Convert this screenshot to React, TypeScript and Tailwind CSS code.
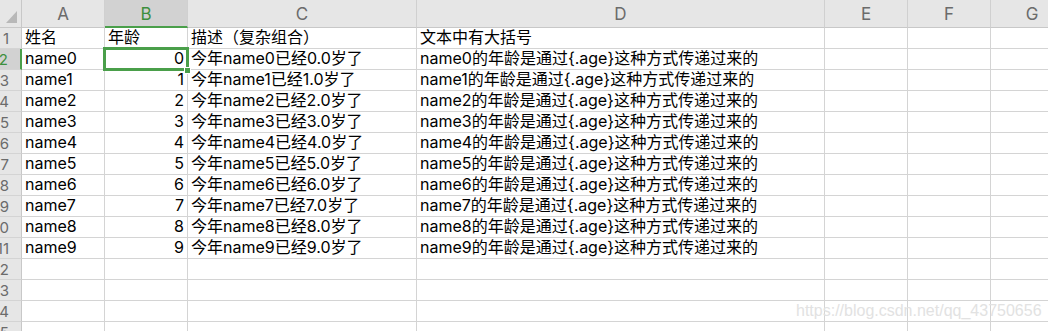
import type { ReactNode } from "react";

const FONT = "font-['Inter','Noto_Sans_CJK_SC',sans-serif]";

// column widths incl. right gridline
const COLS = [
  { key: "A", w: "w-[83px]" },
  { key: "B", w: "w-[83px]" },
  { key: "C", w: "w-[229px]" },
  { key: "D", w: "w-[408px]" },
  { key: "E", w: "w-[83px]" },
  { key: "F", w: "w-[83px]" },
  { key: "G", w: "w-[83px]" },
];

type Row = { n: number; cells: string[] };

const rows: Row[] = [
  { n: 1, cells: ["姓名", "年龄", "描述（复杂组合）", "文本中有大括号", "", "", ""] },
  ...Array.from({ length: 10 }, (_, i) => ({
    n: i + 2,
    cells: [
      `name${i}`,
      `${i}`,
      `今年name${i}已经${i}.0岁了`,
      `name${i}的年龄是通过{.age}这种方式传递过来的`,
      "",
      "",
      "",
    ],
  })),
  ...[12, 13, 14, 15].map((n) => ({ n, cells: ["", "", "", "", "", "", ""] })),
];

function RowHeader({ n, active }: { n: number; active: boolean }) {
  return (
    <div
      className={`flex h-[21px] w-[22px] shrink-0 items-center justify-end overflow-hidden border-b border-[#d4d4d4] pr-[12px] text-[15px] leading-none whitespace-nowrap ${
        active
          ? "border-r-2 border-r-[#4a9f4a] bg-[#d2d2d2] text-[#3d8f3d]"
          : "border-r border-r-[#c8c8c8] bg-[#e6e6e6] text-[#6b6b6b]"
      }`}
    >
      {n}
    </div>
  );
}

function Cell({ w, children, right, selected }: { w: string; children?: ReactNode; right?: boolean; selected?: boolean }) {
  return (
    <div
      className={`relative flex h-[21px] shrink-0 items-end border-r border-b border-[#d4d4d4] px-[3px] pb-[1px] text-[16px] leading-[20px] whitespace-nowrap text-black ${w} ${
        right ? "justify-end" : ""
      }`}
    >
      {children}
      {selected && (
        <>
          <div className="absolute -top-[2px] -left-[2px] z-10 h-[24px] w-[86px] border-[3px] border-[#4a9f4a]" />
          <div className="absolute -right-[4px] -bottom-[5px] z-20 h-[7px] w-[7px] border border-white bg-[#4a9f4a]" />
        </>
      )}
    </div>
  );
}

export default function App() {
  return (
    <div className={`relative h-[331px] w-[1048px] overflow-hidden bg-white ${FONT}`}>
      {/* column headers */}
      <div className="flex h-[28px]">
        <div className="relative h-[28px] w-[22px] shrink-0 border-r border-b border-[#c8c8c8] bg-[#e6e6e6]">
          <svg className="absolute top-[11px] left-[6px]" width="12" height="13" viewBox="0 0 12 13">
            <polygon points="11,0 11,12 0,12" fill="#b8b8b8" />
          </svg>
        </div>
        {COLS.map((c) => {
          const active = c.key === "B";
          return (
            <div
              key={c.key}
              className={`flex h-[28px] shrink-0 items-center justify-center border-r border-[#d0d0d0] pt-[2px] text-[17px] leading-none ${c.w} ${
                active
                  ? "border-b-2 border-b-[#4a9f4a] bg-[#d2d2d2] text-[#3d8f3d]"
                  : "border-b border-b-[#c8c8c8] bg-[#e6e6e6] text-[#6b6b6b]"
              }`}
            >
              {c.key}
            </div>
          );
        })}
      </div>

      {rows.map((r) => (
        <div key={r.n} className="flex">
          <RowHeader n={r.n} active={r.n === 2} />
          {COLS.map((c, i) => (
            <Cell key={c.key} w={c.w} right={i === 1 && r.n > 1} selected={i === 1 && r.n === 2}>
              {r.cells[i]}
            </Cell>
          ))}
        </div>
      ))}

      {/* watermark */}
      <div className="pointer-events-none absolute top-[303px] left-[796px] font-['Liberation_Sans',sans-serif] text-[16px] leading-none text-[#e2e2e2]">
        https://blog.csdn.net/qq_43750656
      </div>
    </div>
  );
}
